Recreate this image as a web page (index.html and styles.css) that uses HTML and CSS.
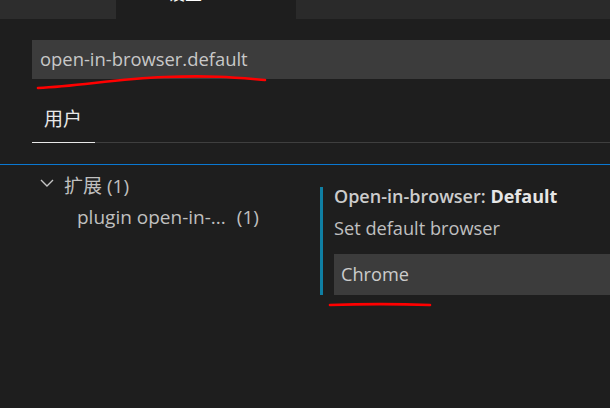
FILE: index.html
```html
<!DOCTYPE html>
<html lang="zh-CN">
<head>
<meta charset="utf-8">
<title>设置</title>
<link rel="stylesheet" href="styles.css">
</head>
<body>
<div class="page">
  <div class="tabs">
    <div class="tab tab-first"></div>
    <div class="tab tab-active"><span class="tab-label">设置</span></div>
    <div class="tab tab-rest"></div>
  </div>

  <div class="search-wrap">
    <div class="search">open-in-browser.default</div>
  </div>

  <div class="scope-bar">
    <div class="scope-tab">用户</div>
  </div>

  <div class="divider"></div>

  <div class="body">
    <div class="toc">
      <div class="toc-row">
        <svg class="chevron" width="14" height="9" viewBox="0 0 14 9"><polyline points="1,1 7,7 13,1" fill="none" stroke="#c5c5c5" stroke-width="1.4"/></svg>
        <span class="toc-label">扩展 (1)</span>
      </div>
      <div class="toc-row toc-child">
        <span class="toc-label">plugin open-in-...</span><span class="toc-count">(1)</span>
      </div>
    </div>

    <div class="setting">
      <div class="setting-bar"></div>
      <div class="setting-content">
        <div class="setting-title"><span class="cat">Open-in-browser: </span><span class="key">Default</span></div>
        <div class="setting-desc">Set default browser</div>
        <div class="setting-input">Chrome</div>
      </div>
    </div>
  </div>

  <svg class="marks" width="610" height="408" viewBox="0 0 610 408">
    <path d="M38 88 C 80 86, 115 79, 165 77 S 240 78, 265 80" fill="none" stroke="#ff0000" stroke-width="2.6" stroke-linecap="round"/>
    <path d="M330 305 C 360 304, 400 304, 430 305" fill="none" stroke="#ff0000" stroke-width="2.6" stroke-linecap="round"/>
  </svg>
</div>
</body>
</html>
```

FILE: styles.css
```css
* { box-sizing: border-box; }
html, body {
  margin: 0;
  padding: 0;
  background: #1e1e1e;
}
body {
  width: 610px;
  height: 408px;
  overflow: hidden;
  font-family: "Open Sans", "Noto Sans CJK SC", sans-serif;
  color: #cccccc;
}
.page {
  position: relative;
  width: 610px;
  height: 408px;
  overflow: hidden;
}
.tabs {
  display: flex;
  height: 19px;
}
.tab-first { width: 116px; background: #2d2d2d; }
.tab-active {
  width: 180px;
  background: #1e1e1e;
  overflow: hidden;
  padding-left: 52px;
}
.tab-label {
  display: block;
  margin-top: -17px;
  font-size: 17px;
  line-height: 20px;
  color: #ffffff;
  font-family: "Noto Sans CJK SC", sans-serif;
}
.tab-rest { flex: 1; background: #2a2a2a; }

.search-wrap {
  padding: 21px 0 0 32px;
}
.search {
  height: 39px;
  background: #3c3c3c;
  padding-left: 8px;
  font-size: 18.4px;
  line-height: 38px;
  color: #c8c8c8;
}

.scope-bar {
  margin: 20px 0 0 32px;
  border-bottom: 1px solid #3f3f3f;
  display: flex;
}
.scope-tab {
  width: 63px;
  padding-left: 12px;
  font-family: "Noto Sans CJK SC", sans-serif;
  font-size: 19px;
  line-height: 38px;
  height: 44px;
  color: #e8e8e8;
  border-bottom: 1px solid #e8e8e8;
  margin-bottom: -1px;
}

.divider {
  margin-top: 21px;
  height: 1px;
  background: #0a78d2;
}

.body {
  display: flex;
}
.toc {
  width: 320px;
  padding-top: 4px;
  padding-left: 40px;
}
.toc-row {
  display: flex;
  align-items: center;
  height: 32px;
  font-size: 19px;
  color: #c0c0c0;
}
.chevron {
  margin-right: 10px;
  margin-top: -4px;
}
.toc-child {
  padding-left: 37px;
}
.toc-count {
  margin-left: 11px;
}

.setting {
  flex: 1;
  display: flex;
  margin-top: 22px;
}
.setting-bar {
  width: 3px;
  height: 108px;
  background: #0f7fa3;
}
.setting-content {
  flex: 1;
  padding-left: 11px;
}
.setting-title {
  font-size: 18px;
  line-height: 20px;
  margin-top: -1px;
  color: #cccccc;
  white-space: nowrap;
}
.setting-title .cat { font-weight: 600; }
.setting-title .key { font-weight: 700; color: #e6e6e6; }
.setting-desc {
  font-size: 18.2px;
  line-height: 20px;
  margin-top: 12px;
  color: #c0c0c0;
}
.setting-input {
  margin-top: 16px;
  height: 41px;
  background: #3c3c3c;
  padding-left: 7px;
  font-size: 18.2px;
  line-height: 41px;
  color: #cccccc;
}

.marks {
  position: absolute;
  left: 0;
  top: 0;
  pointer-events: none;
}
```
